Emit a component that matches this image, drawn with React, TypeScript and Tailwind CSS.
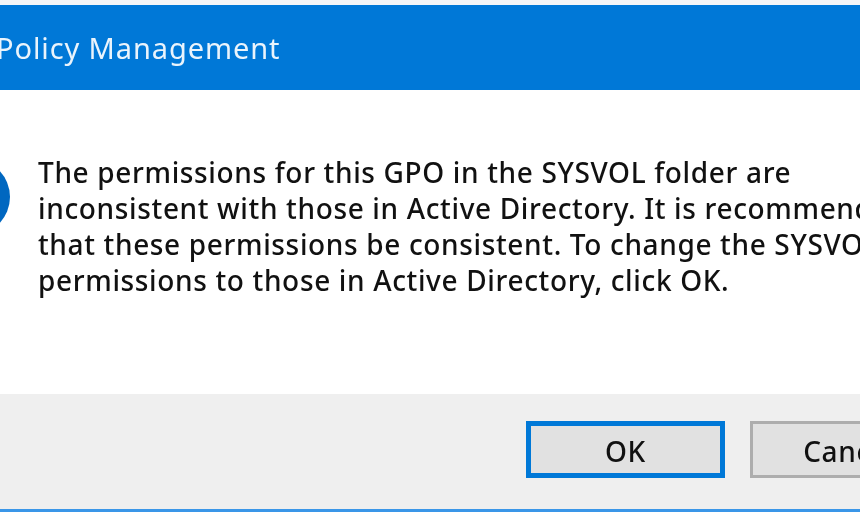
const font = "font-['Noto_Sans','Open_Sans',sans-serif]";

export default function App() {
  return (
    <div className={`h-[520px] w-[860px] overflow-hidden bg-white blur-[0.5px] ${font}`}>
      <div className="h-[5px] bg-[#f4f6f8]" />
      <div className="flex h-[85px] items-center bg-[#0078d7]">
        <span className="-ml-[4px] whitespace-nowrap text-[29px] leading-none tracking-[0.9px] text-[#eaf4fc]">Policy Management</span>
      </div>
      <div className="flex h-[304px] items-start pt-[64px]">
        <div className="-ml-[66px] mt-[5px] h-[76px] w-[76px] shrink-0 rounded-full bg-[#0067c0]" />
        <div className="ml-[28px] whitespace-nowrap text-[28px] font-medium leading-[36px] tracking-[0.65px] text-[#111111]">
          <div>The permissions for this GPO in the SYSVOL folder are</div>
          <div>inconsistent with those in Active Directory. It is recommended</div>
          <div>that these permissions be consistent. To change the SYSVOL</div>
          <div>permissions to those in Active Directory, click OK.</div>
        </div>
      </div>
      <div className="flex h-[115px] items-start gap-[25px] bg-[#efefef] pl-[526px] pt-[27px]">
        <button className="h-[57px] w-[199px] shrink-0 border-[5px] border-[#0078d7] bg-[#e1e1e1] pt-[2px] text-[28px] font-medium tracking-[0.65px] text-[#111111]">OK</button>
        <button className="h-[57px] w-[199px] shrink-0 border-[3px] border-[#adadad] bg-[#e1e1e1] pt-[2px] text-[28px] font-medium tracking-[0.65px] text-[#111111]">Cancel</button>
      </div>
      <div className="h-[3px] bg-[#3a96e8]" />
    </div>
  );
}
